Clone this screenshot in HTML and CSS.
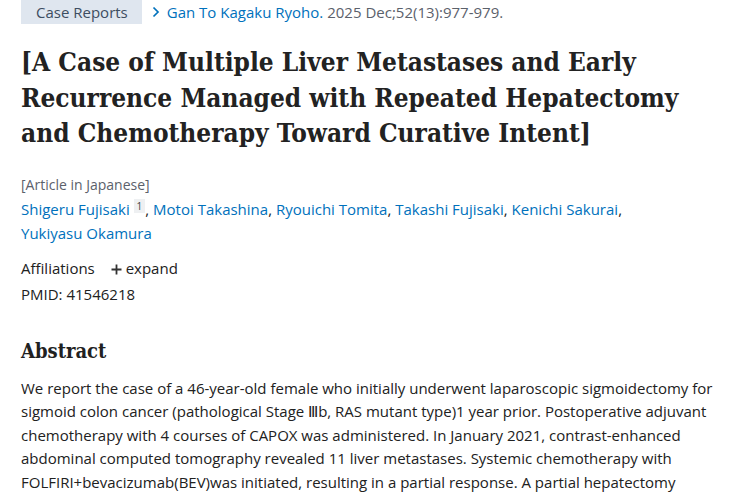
FILE: index.html
```html
<!DOCTYPE html>
<html lang="en">
<head>
<meta charset="utf-8">
<link rel="stylesheet" href="styles.css">
</head>
<body>
<main class="article">
  <div class="top">
    <span class="badge">Case Reports</span>
    <span class="cite"><svg class="chev" width="8" height="12" viewBox="0 0 8 12"><path d="M1.5 1.5l4.5 4.5-4.5 4.5" stroke="#0071bc" stroke-width="1.7" fill="none"/></svg><a class="journal">Gan To Kagaku Ryoho.</a> 2025 Dec;52(13):977-979.</span>
  </div>
  <h1 class="title">[A Case of Multiple Liver Metastases and Early Recurrence Managed with Repeated Hepatectomy and Chemotherapy Toward Curative Intent]</h1>
  <div class="lang">[Article in Japanese]</div>
  <div class="authors"><span class="author"><a>Shigeru Fujisaki</a> <sup class="aff">1</sup>,</span> <span class="author"><a>Motoi Takashina</a>,</span> <span class="author"><a>Ryouichi Tomita</a>,</span> <span class="author"><a>Takashi Fujisaki</a>,</span> <span class="author"><a>Kenichi Sakurai</a>,</span> <span class="author"><a>Yukiyasu Okamura</a></span></div>
  <div class="affil">Affiliations <span class="expand"><svg class="plus" width="11" height="11" viewBox="0 0 11 11"><path d="M5.5 0.5v10M0.5 5.5h10" stroke="#333" stroke-width="1.8" fill="none"/></svg>expand</span></div>
  <div class="pmid">PMID: 41546218</div>
  <h2 class="abs-title">Abstract</h2>
  <p class="abs">We report the case of a 46-year-old female who initially underwent laparoscopic sigmoidectomy for sigmoid colon cancer (pathological Stage Ⅲb, RAS mutant type)1 year prior. Postoperative adjuvant chemotherapy with 4 courses of CAPOX was administered. In January 2021, contrast-enhanced abdominal computed tomography revealed 11 liver metastases. Systemic chemotherapy with FOLFIRI+bevacizumab(BEV)was initiated, resulting in a partial response. A partial hepatectomy was&nbsp;performed.</p>
</main>
</body>
</html>
```
FILE: styles.css
```css
html, body {
  margin: 0;
  padding: 0;
  background: #fff;
}
body {
  font-family: "Open Sans", "Noto Sans", sans-serif;
  color: #212121;
  overflow: hidden;
  height: 500px;
}
.article {
  padding: 0 21px;
}
.top {
  display: flex;
  align-items: center;
  height: 24px;
  font-size: 15px;
  white-space: nowrap;
}
.badge {
  background: #dfe6ef;
  color: #3d4d61;
  height: 24px;
  line-height: 24px;
  padding: 0 14px 0 15px;
}
.cite {
  color: #5b616b;
  margin-left: 10px;
  display: flex;
  align-items: center;
}
.chev {
  margin-right: 7px;
}
.journal {
  color: #0071bc;
  margin-right: 4px;
}
.title {
  font-family: "DejaVu Serif Condensed", "DejaVu Serif", serif;
  font-stretch: condensed;
  font-weight: bold;
  font-size: 26px;
  line-height: 35.5px;
  margin: 21px 0 0;
  color: #222;
}
.lang {
  color: #5b616b;
  font-size: 14px;
  line-height: 24px;
  margin-top: 21px;
}
.authors {
  font-size: 15px;
  line-height: 24px;
  color: #212121;
  padding-right: 60px;
}
.author {
  white-space: nowrap;
}
.authors a {
  color: #0071bc;
}
.aff {
  font-size: 10px;
  background: #eef0f2;
  color: #444;
  padding: 0 3px;
  vertical-align: 5px;
  line-height: 10px;
}
.affil {
  font-size: 15px;
  line-height: 24px;
  margin-top: 11px;
}
.expand {
  margin-left: 12px;
}
.plus {
  vertical-align: -1px;
  margin-right: 4px;
}
.pmid {
  font-size: 15px;
  line-height: 24px;
  margin-top: 2px;
}
.abs-title {
  font-family: "DejaVu Serif Condensed", "DejaVu Serif", serif;
  font-stretch: condensed;
  font-weight: bold;
  font-size: 20px;
  line-height: 28px;
  margin: 31px 0 0;
}
.abs {
  font-size: 15px;
  line-height: 23.5px;
  margin: 12px 0 0;
}
```
